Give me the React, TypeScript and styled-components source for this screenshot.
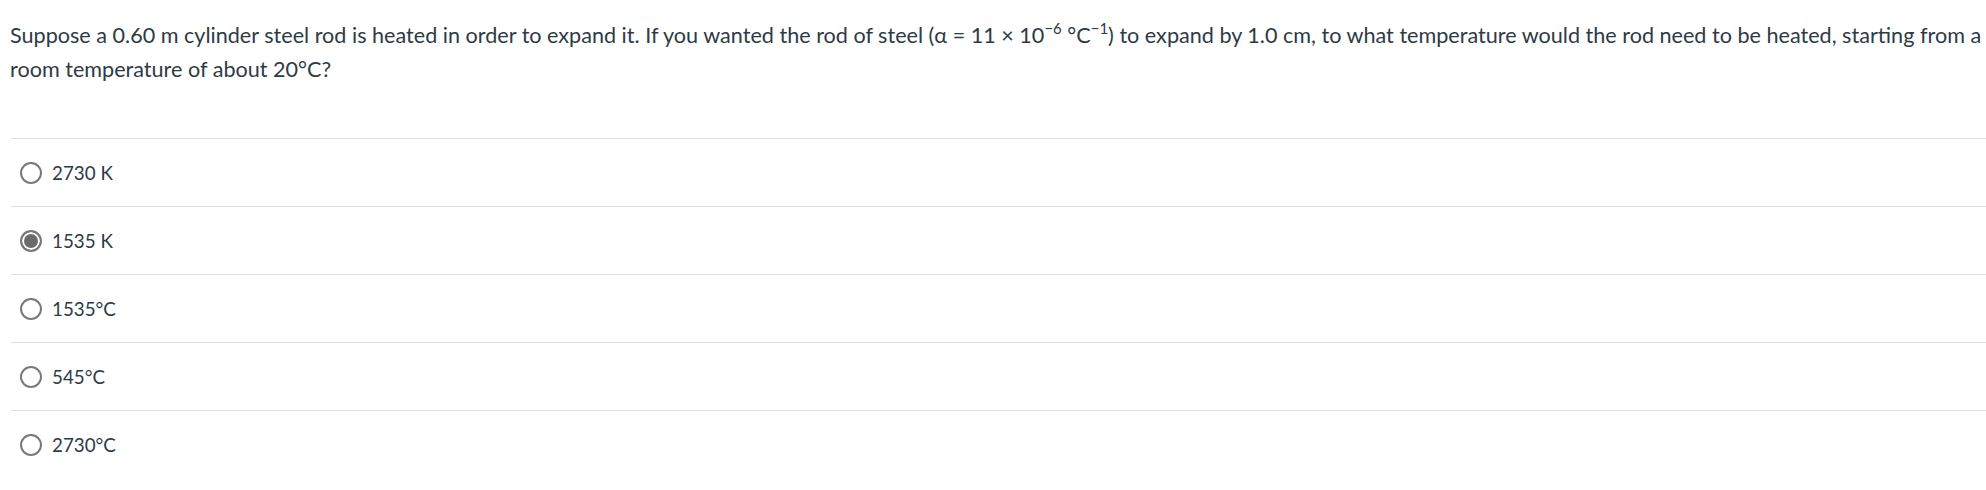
import React from "react";
import styled, { createGlobalStyle } from "styled-components";

const GlobalStyle = createGlobalStyle`
  html, body {
    margin: 0;
    padding: 0;
    background: #ffffff;
  }
  body {
    font-family: Lato, "Open Sans", "Liberation Sans", sans-serif;
    color: #2d3b45;
    overflow: hidden;
  }
`;

const StyledQuestion = styled.div`
  width: 2010px;
  padding: 18px 0 0 10px;
`;

const StyledPrompt = styled.div`
  width: 1992px;
  font-size: 21.6px;
  line-height: 34px;
  margin-bottom: 52px;

  sup {
    font-size: 15px;
    line-height: 0;
    vertical-align: 9px;
  }
`;

const StyledAnswers = styled.div`
  display: flex;
  flex-direction: column;
  margin-left: 1px;
`;

const StyledAnswer = styled.label`
  display: flex;
  align-items: center;
  gap: 10px;
  height: 68px;
  border-top: 1px solid #e0e0e0;
  padding-left: 9px;
  box-sizing: border-box;
  font-size: 18.8px;
  cursor: pointer;
`;

const StyledRadio = styled.input`
  appearance: none;
  margin: 0;
  width: 22px;
  height: 22px;
  border-radius: 50%;
  border: 2px solid #7a7a7a;
  box-sizing: border-box;
  background: #fff;
  flex-shrink: 0;

  &:checked {
    background: #6b6b6b;
    box-shadow: inset 0 0 0 2px #fff;
  }
`;

const StyledText = styled.span`
  line-height: 24px;
`;

const answers = [
  { id: "a", text: "2730 K" },
  { id: "b", text: "1535 K" },
  { id: "c", text: "1535°C" },
  { id: "d", text: "545°C" },
  { id: "e", text: "2730°C" },
];

const App: React.FC = () => {
  const [selected, setSelected] = React.useState("b");

  return (
    <>
      <GlobalStyle />
      <StyledQuestion>
        <StyledPrompt>
          Suppose a 0.60 m cylinder steel rod is heated in order to expand it.
          If you wanted the rod of steel (α = 11 × 10<sup>−6</sup> °C
          <sup>−1</sup>) to expand by 1.0 cm, to what temperature would the rod
          need to be heated, starting from a room temperature of about 20°C?
        </StyledPrompt>
        <StyledAnswers>
          {answers.map((a) => (
            <StyledAnswer key={a.id}>
              <StyledRadio
                type="radio"
                name="answer"
                checked={selected === a.id}
                onChange={() => setSelected(a.id)}
              />
              <StyledText>{a.text}</StyledText>
            </StyledAnswer>
          ))}
        </StyledAnswers>
      </StyledQuestion>
    </>
  );
};

export default App;
